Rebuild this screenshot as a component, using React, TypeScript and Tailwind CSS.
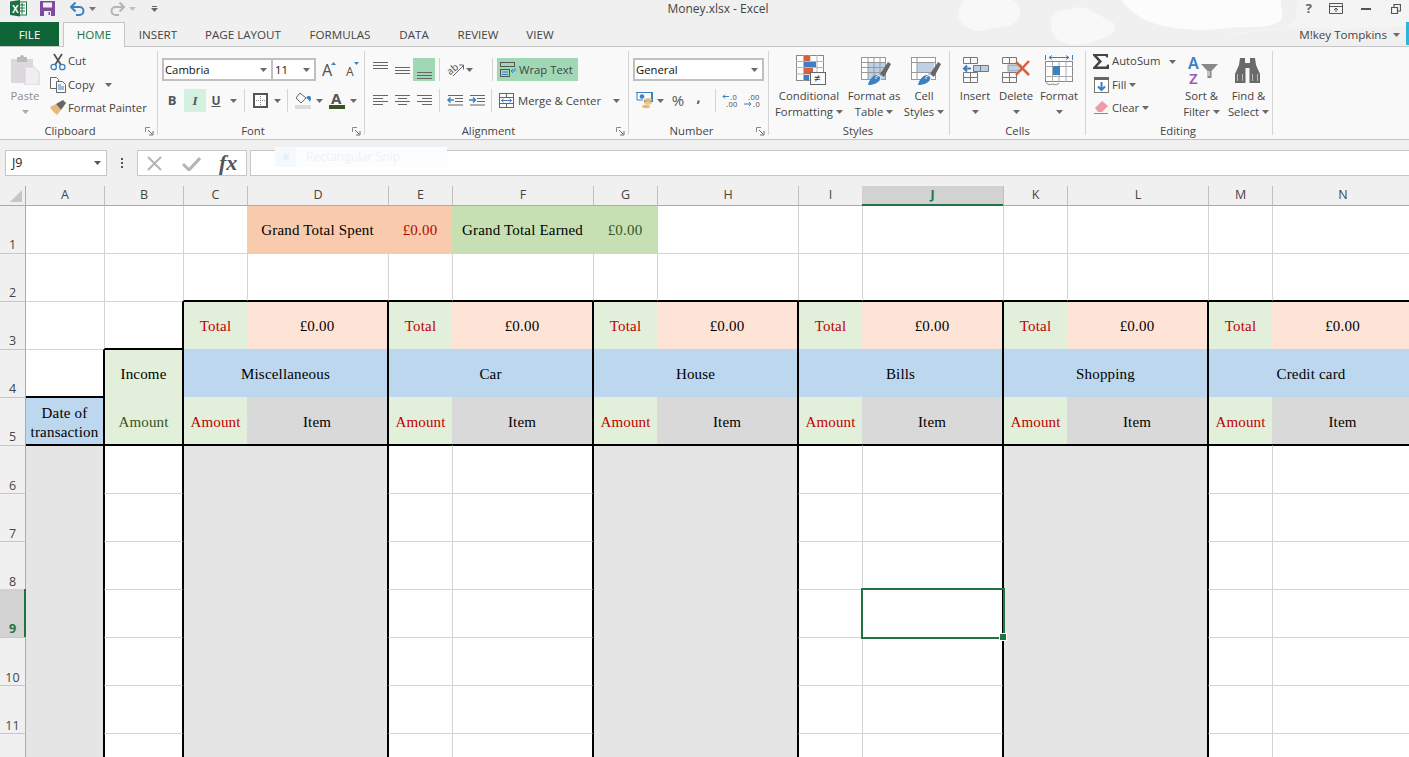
import React from 'react';

const Caret = ({ c = '#6a6a6a' }: { c?: string }) => (
  <svg width="7" height="4" viewBox="0 0 7 4" className="shrink-0"><path d="M0 0h7L3.5 4z" fill={c} /></svg>
);

const Launcher = () => (
  <svg width="9" height="9" viewBox="0 0 9 9" className="absolute right-[3px] bottom-[-1px]">
    <path d="M.5 5V.5H5" fill="none" stroke="#8a8a8a" />
    <path d="M3 3l4 4M8 4v4H4" fill="none" stroke="#6a6a6a" />
  </svg>
);

const GroupLabel = ({ children, cls = '' }: { children: React.ReactNode; cls?: string }) => (
  <div className={`mt-auto h-[17px] mb-[-4px] leading-[17px] text-center text-[#444] ${cls}`}>{children}</div>
);

const Sep = () => <div className="w-px h-[23px] bg-[#d4d4d4] shrink-0" />;

const Lines = ({ ys, xs }: { ys: number[]; xs: [number, number][] }) => (
  <svg width="15" height="22" viewBox="0 0 15 22">
    {ys.map((y, i) => (
      <path key={i} d={`M${xs[i][0]} ${y + 0.5}H${xs[i][1]}`} stroke="#666" strokeWidth="1" />
    ))}
  </svg>
);

const Big = ({ icon, l1, l2, w, iconCls = '' }: { icon: React.ReactNode; l1: string; l2?: string; w: string; iconCls?: string }) => (
  <div className={`${w} flex flex-col items-center shrink-0 pt-[4px]`}>
    <div className={`h-[30px] flex items-center justify-center ${iconCls}`}>{icon}</div>
    <div className="mt-[3px] h-[16px] leading-[16px] whitespace-nowrap">{l1}</div>
    <div className="h-[16px] leading-[16px] whitespace-nowrap flex items-center gap-[3px]">
      {l2}
      <Caret />
    </div>
  </div>
);

const ExcelIcon = () => (
  <svg width="17" height="17" viewBox="0 0 17 17">
    <rect x="7" y="2" width="9.5" height="13" fill="#fff" stroke="#217346" />
    <path d="M9 5h6M9 8h6M9 11h6M12 3v11" stroke="#217346" />
    <path d="M0 1.5 10 0v16.5L0 15z" fill="#1d7044" />
    <text x="2" y="12.5" fontSize="10" fontWeight="700" fill="#fff" fontFamily="Liberation Sans">X</text>
  </svg>
);
const SaveIcon = () => (
  <svg width="15" height="15" viewBox="0 0 15 15">
    <path d="M0 0h15v15H0z" fill="#7d4c9e" />
    <path d="M3 1.5h9v5H3z" fill="#f0f0f0" />
    <path d="M4 10h7v5H4z" fill="#f0f0f0" />
    <path d="M8.5 11h1.5v3H8.5z" fill="#7d4c9e" />
  </svg>
);
const Undo = ({ c, flip }: { c: string; flip?: boolean }) => (
  <svg width="15" height="14" viewBox="0 0 15 14" style={flip ? { transform: 'scaleX(-1)' } : undefined}>
    <path d="M2 5h7.5a4 4 0 0 1 0 8H6" fill="none" stroke={c} strokeWidth="2" />
    <path d="M5.5 0.5 1 5l4.5 4.5" fill="none" stroke={c} strokeWidth="2" />
  </svg>
);

const Paste = () => (
  <svg width="29" height="30" viewBox="0 0 29 30">
    <path d="M0 4h22v24H0z" fill="#dcd8dc" />
    <path d="M6 2h3a2 2 0 0 1 4 0h3v5H6z" fill="#bdb9bd" />
    <path d="M14 12h9l5 5v13H14z" fill="#f1eef3" stroke="#d6d2d8" />
  </svg>
);
const Scissors = () => (
  <svg width="16" height="18" viewBox="0 0 16 18">
    <path d="M4 1l7 11M12 1 5 12" stroke="#555" strokeWidth="1.8" fill="none" />
    <circle cx="3.7" cy="14" r="2.7" fill="none" stroke="#3d7fc1" strokeWidth="1.3" />
    <circle cx="12.3" cy="14" r="2.7" fill="none" stroke="#3d7fc1" strokeWidth="1.3" />
  </svg>
);
const CopyIcon = () => (
  <svg width="16" height="16" viewBox="0 0 16 16">
    <path d="M.5.5h6l2 2v9h-8z" fill="#fafafa" stroke="#666" />
    <path d="M6.5 4.5h6l3 3v8h-9z" fill="#fafafa" stroke="#666" />
    <path d="M8 8h3M8 10h6M8 12h6" stroke="#3d7fc1" />
  </svg>
);
const Brush = () => (
  <svg width="16" height="15" viewBox="0 0 16 15">
    <path d="M0 7l6-3 5 6-4 5C5 13 2 11 0 7z" fill="#e8b878" />
    <path d="M6 4l7-4 3 3-5 7z" fill="#666" />
  </svg>
);
const GrowA = ({ big }: { big?: boolean }) => (
  <svg width="15" height="22" viewBox="0 0 15 22" className="overflow-visible">
    <text x={big ? 0 : 1} y="17" fontSize={big ? 16 : 12} fill="#555" fontFamily="Noto Sans">A</text>
    {big ? <path d="M9 6l2.500-3L14 6z" fill="#3d7fc1" /> : <path d="M9 3l2.500 3L14 3z" fill="#3d7fc1" />}
  </svg>
);
const BorderIcon = () => (
  <svg width="15" height="15" viewBox="0 0 15 15">
    <rect x="1" y="1" width="13" height="13" fill="#fff" stroke="#555" strokeWidth="2" />
    <path d="M7.500 3v9M3 7.500h9" stroke="#888" strokeDasharray="1 1" />
  </svg>
);
const FillIcon = () => (
  <svg width="17" height="19" viewBox="0 0 17 19">
    <path d="M5 2 1 7l5 5 5-5z" fill="#fafafa" stroke="#666" />
    <path d="M11 7c2-3 5-3 5 1l-1 3c-1-2-2-3-4-4z" fill="#3d7fc1" />
    <rect x="0" y="14" width="16" height="4" fill="#dcdcdc" />
  </svg>
);
const ColorA = () => (
  <svg width="17" height="19" viewBox="0 0 17 19" className="overflow-visible">
    <text x="2" y="13" fontSize="15" fontWeight="700" fill="#555" fontFamily="Noto Sans">A</text>
    <rect x="0" y="14" width="16" height="4" fill="#375623" />
  </svg>
);
const Orient = () => (
  <svg width="17" height="15" viewBox="0 0 17 15" className="overflow-visible">
    <text x="0" y="11" fontSize="10" fill="#555" fontFamily="Noto Sans" transform="rotate(-40 5 8)">ab</text>
    <path d="M6 14 16 4M12 3h4.500v4.500" stroke="#666" fill="none" />
  </svg>
);
const Indent = ({ inc }: { inc?: boolean }) => (
  <svg width="16" height="11" viewBox="0 0 16 11">
    <path d="M1 .5h15M8 3.500h8M8 6.500h8M1 10H16" stroke="#666" />
    {inc ? <path d="M0 5h6M4 2.500 6.500 5 4 7.500" stroke="#3d7fc1" strokeWidth="1.500" fill="none" /> : <path d="M7 5H1M3.500 2.500 1 5l2.500 2.500" stroke="#3d7fc1" strokeWidth="1.500" fill="none" />}
  </svg>
);
const WrapIcon = () => (
  <svg width="16" height="15" viewBox="0 0 16 15">
    <rect x=".5" y=".5" width="14" height="4" fill="none" stroke="#555" />
    <rect x=".5" y="7.500" width="9" height="7" fill="none" stroke="#555" />
    <path d="M2 10h6M2 12.500h6" stroke="#3d7fc1" />
    <path d="M15 6v3h-4M13 7l-2 2 2 2" stroke="#3d7fc1" fill="none" />
  </svg>
);
const MergeIcon = () => (
  <svg width="15" height="15" viewBox="0 0 15 15">
    <rect x=".5" y=".5" width="14" height="14" fill="#fafafa" stroke="#666" />
    <path d="M0 4.500h15M0 10.500h15M7.500 0v4M7.500 11v4" stroke="#666" />
    <path d="M2.500 7.500h10M4.500 5.800l-2 1.700 2 1.700M10.500 5.800l2 1.700-2 1.700" stroke="#3d7fc1" fill="none" />
  </svg>
);
const Accounting = () => (
  <svg width="17" height="17" viewBox="0 0 17 17">
    <path d="M0 0h16v9H8" fill="none" stroke="#3d7fc1" strokeWidth="2" />
    <path d="M1 1v7h6" fill="none" stroke="#3d7fc1" />
    <circle cx="6" cy="4.500" r="2.300" fill="#3d7fc1" />
    <ellipse cx="12" cy="8" rx="4" ry="1.700" fill="#e8b878" />
    <ellipse cx="12" cy="11" rx="4" ry="1.700" fill="#eec98f" />
    <ellipse cx="10" cy="14.500" rx="4" ry="1.700" fill="#e8b878" />
  </svg>
);
const DecIcon = ({ inc }: { inc?: boolean }) => (
  <svg width="17" height="15" viewBox="0 0 17 15" className="overflow-visible">
    {inc ? (
      <>
        <text x="4" y="6.500" fontSize="7.500" letterSpacing="0.4" fill="#555" fontFamily="Noto Sans">.00</text>
        <text x="9" y="14" fontSize="7.500" letterSpacing="0.4" fill="#555" fontFamily="Noto Sans">.0</text>
        <path d="M0 11h7M5 9l2 2-2 2" stroke="#3d7fc1" fill="none" />
      </>
    ) : (
      <>
        <text x="8" y="6.500" fontSize="7.500" letterSpacing="0.4" fill="#555" fontFamily="Noto Sans">.0</text>
        <text x="4" y="14" fontSize="7.500" letterSpacing="0.4" fill="#555" fontFamily="Noto Sans">.00</text>
        <path d="M7 3.500H1M3 1.500l-2 2 2 2" stroke="#3d7fc1" fill="none" />
      </>
    )}
  </svg>
);
const CondIcon = () => (
  <svg width="30" height="30" viewBox="0 0 30 30">
    <rect x=".5" y=".5" width="27" height="25" fill="#fff" stroke="#888" />
    <path d="M7.500 0v26M14 0v26M21 0v26M0 6.500h28M0 12.500h28M0 19h28" stroke="#b5b5b5" />
    <rect x="8" y="1" width="6" height="5" fill="#d9603b" />
    <rect x="8" y="7" width="12" height="5" fill="#3d7fc1" />
    <rect x="8" y="13" width="9" height="6" fill="#d9603b" />
    <rect x="8" y="20" width="5" height="5" fill="#3d7fc1" />
    <rect x="14.500" y="17.500" width="15" height="12" fill="#fafafa" stroke="#666" />
    <text x="18" y="27" fontSize="11" fill="#333" fontFamily="Liberation Sans">≠</text>
  </svg>
);
const TableIcon = ({ cell }: { cell?: boolean }) => (
  <svg width="30" height="30" viewBox="0 0 30 30">
    <rect x=".5" y="2.500" width="24" height="22" fill="#fff" stroke="#999" />
    {cell ? (
      <>
        <rect x="6" y="7" width="17" height="10" fill="#bdd0e6" />
        <path d="M0 7.500h25M6 3v22M0 17.500h25M18 17v8" stroke="#999" fill="none" />
      </>
    ) : (
      <>
        <rect x="7" y="7" width="17" height="17" fill="#bdd0e6" />
        <path d="M0 7.500h25M0 12.500h25M0 17.500h25M7 3v22M13 3v22M19 3v22" stroke="#999" fill="none" />
      </>
    )}
    <path d="M19 19l8-12 3 2-7 13z" fill="#666" />
    <path d="M7 30c1-5 5-10 9-10 3 0 5 3 3 5-2 3-7 5-12 5z" fill="#3d7fc1" />
    <path d="M15 24a2.500 2.500 0 1 1 4 1" fill="none" stroke="#fff" />
  </svg>
);
const InsertIcon = () => (
  <svg width="27" height="28" viewBox="0 0 27 28">
    <path d="M1.500 1.500h14v6h-14zM8.500 1.500v6M1.500 16.500h14v10h-14zM1.500 21.500h14M8.500 16.500v10" fill="none" stroke="#777" />
    <path d="M11.500 9.500h15v6h-15zM18.500 9.500v6" fill="#bdd0e6" stroke="#777" />
    <path d="M9 12.500H2M5 9.500l-3 3 3 3" fill="none" stroke="#3d7fc1" strokeWidth="2" />
  </svg>
);
const DeleteIcon = () => (
  <svg width="30" height="28" viewBox="0 0 30 28">
    <path d="M1.500 1.500h14v6h-14zM8.500 1.500v6M1.500 16.500h14v10h-14zM1.500 21.500h14M8.500 16.500v10" fill="none" stroke="#777" />
    <rect x="7" y="9" width="13" height="6" fill="#bdd0e6" stroke="#999" />
    <path d="M15 6l13 13M28 5 15 19" stroke="#d9603b" strokeWidth="2.500" />
  </svg>
);
const FormatIcon = () => (
  <svg width="29" height="31" viewBox="0 0 29 31">
    <path d="M.5 0v5M27.500 0v5M4 2.500h20M7 .5l-3 2 3 2M21 .5l3 2-3 2" fill="none" stroke="#3d7fc1" />
    <rect x=".5" y="6.500" width="27" height="20" fill="#fff" stroke="#888" />
    <path d="M7.500 7v20M14 7v20M21 7v20M0 11.500h28M0 21.500h28" stroke="#aaa" />
    <rect x="8" y="11" width="7" height="9" fill="#3d7fc1" />
    <path d="M1 27c1 3 5 3 7 2 2 1 5 1 6-1" fill="none" stroke="#888" />
  </svg>
);
const Sigma = () => (
  <svg width="16" height="15" viewBox="0 0 16 15"><path d="M0 0h15v3.500h-1.500L12.500 2H4l5 5.500L4 12.500h9l1.500-2H16V15H0v-1.500L5.500 7.500 0 1.500z" fill="#444" /></svg>
);
const FillDown = () => (
  <svg width="15" height="16" viewBox="0 0 15 16">
    <rect x=".5" y=".5" width="14" height="15" fill="#fff" stroke="#777" />
    <rect x="0" y="0" width="15" height="3" fill="#666" />
    <path d="M7.500 5v8M4 9.500l3.500 3.500L11 9.500" fill="none" stroke="#3d7fc1" strokeWidth="2" />
  </svg>
);
const Eraser = () => (
  <svg width="15" height="13" viewBox="0 0 15 13">
    <path d="M1 7l7-7 6 5-6 6H4z" fill="#ef9aa5" />
    <path d="M0 12.500h14" stroke="#888" />
  </svg>
);
const SortIcon = () => (
  <svg width="31" height="28" viewBox="0 0 31 28" className="overflow-visible">
    <text x="0" y="13" fontSize="16" fontWeight="600" fill="#3d7fc1" fontFamily="Noto Sans">A</text>
    <text x="1" y="28" fontSize="15" fontWeight="600" fill="#9a5cb4" fontFamily="Noto Sans">Z</text>
    <path d="M13 8h17l-6.500 7v7h-4v-7z" fill="#888" />
    <path d="M21 15v5" stroke="#fff" />
  </svg>
);
const Binoculars = () => (
  <svg width="27" height="25" viewBox="0 0 27 25">
    <path d="M6 0h5v5h5V0h5l1 7 4 9v9H15.500V10h-4v15H1v-9l4-9z" fill="#6a6a6a" />
    <path d="M3.500 16v7M8.500 16v7M18.500 16v7M23.500 16v7" stroke="#bbb" />
  </svg>
);

const Clouds = () => (
  <svg width="464" height="46" viewBox="0 0 464 46" className="absolute left-[945px] top-0 pointer-events-none">
    <g fill="#f8f8f8">
      <path d="M18 0h50c8 6 10 14 4 20-4 6-14 8-24 8-10 4-20 4-24 0-8-2-12-10-10-18z" />
      <path d="M106 22c-2-8 8-14 18-12 6-4 18-4 24 2 8 4 16 8 22 12 2 8-6 14-18 16-14 6-26 6-34 2-8-2-12-10-12-20z" />
      <path d="M176 0h160c-2 8 6 14-2 22-14 8-30 4-50 6-30 4-60 2-84-8-10-6-18-12-24-20z" fill="#fcfcfc" />
      <path d="M280 36c20-6 60-12 110-6l74-4v-26h-112c0 10 2 20-12 28-20 4-40 4-60 8z" fill="#f4f4f4" />
    </g>
  </svg>
);

const Tab = ({ w, children }: { w: string; children: string }) => (
  <div className={`${w} h-full flex items-center justify-center text-[#444] shrink-0`}>{children}</div>
);

const COLS = ['A', 'B', 'C', 'D', 'E', 'F', 'G', 'H', 'I', 'J', 'K', 'L', 'M', 'N'];
const F_GREEN = 'bg-[#e2efda]';
const F_PEACH = 'bg-[#fde4d6]';
const F_BLUE = 'bg-[#bdd7ee]';
const F_GREY = 'bg-[#d9d9d9]';
const F_LIGHT = 'bg-[#e5e5e5]';
const RED = 'text-[#c00000]';

const vThick = (row: number, c: number) => {
  if (c === 0) return row >= 4;
  if (c % 2 === 1 && c < 13) return row >= 3;
  return false;
};
const hThick = (row: number, c: number) =>
  (row === 2 && c >= 2) || (row === 3 && c === 1) || (row === 4 && c === 0) || row === 5;

type CellProps = {
  row: number;
  c: number;
  span?: boolean;
  fill?: string;
  text?: string;
  color?: string;
};

const Cell = ({ row, c, span, fill, text, color = 'text-black' }: CellProps) => {
  const end = span ? c + 1 : c;
  const rThick = vThick(row, end);
  const lThick = c > 0 && vThick(row, c - 1);
  const bThick = hThick(row, c);
  const tThick = row > 1 && hThick(row - 1, c);
  const cls = [
    'flex items-center justify-center text-center leading-[19px] min-w-0',
    span ? 'col-span-2' : '',
    fill ?? 'bg-white',
    color,
    text ? (row === 5 ? 'pt-[4px]' : row === 4 ? 'pt-[2px]' : 'pt-[1px]') : '',
    rThick ? 'border-r border-r-black' : '',
    lThick ? 'border-l border-l-black' : !fill && c > 0 ? 'border-l border-l-[#d4d4d4]' : '',
    bThick ? 'border-b border-b-black' : '',
    tThick ? 'border-t border-t-black' : !fill && row > 1 ? 'border-t border-t-[#d4d4d4]' : '',
  ].join(' ');
  return <div className={cls}>{text}</div>;
};

const PAIR_NAMES = ['Miscellaneous', 'Car', 'House', 'Bills', 'Shopping', 'Credit card'];

const Sheet = () => {
  const cells: React.ReactNode[] = [];
  cells.push(
    <div key="corner" className="bg-[#f0f0f0] border-r border-b border-[#ababab] flex items-end justify-end p-[3px]">
      <svg width="12" height="12" viewBox="0 0 12 12"><path d="M12 0v12H0z" fill="#c6c6c6" /></svg>
    </div>
  );
  COLS.forEach((c) =>
    cells.push(
      <div
        key={c}
        className={
          c === 'J'
            ? 'bg-[#d2d2d2] border-b-2 border-b-[#217346] flex items-center justify-center text-[#217346] font-bold'
            : c === 'A'
              ? 'bg-[#f0f0f0] border-b border-b-[#ababab] flex items-center justify-center text-[#444]'
              : 'bg-[#f0f0f0] border-l border-l-[#c0c0c0] border-b border-b-[#ababab] flex items-center justify-center text-[#444]'
        }
      >
        {c}
      </div>
    )
  );
  for (let row = 1; row <= 12; row++) {
    cells.push(
      <div
        key={`h${row}`}
        className={
          row === 9
            ? 'bg-[#d2d2d2] border-r-2 border-r-[#217346] flex items-end justify-center pb-[1px] pl-[1px] leading-[14px] text-[#217346] font-bold'
            : row === 1
              ? 'bg-[#f0f0f0] border-r border-r-[#ababab] flex items-end justify-center pb-[1px] leading-[14px] text-[#444]'
              : row >= 6
                ? 'bg-[#f0f0f0] border-r border-r-[#ababab] border-t border-t-[#c6c6c6] flex items-end justify-center leading-[14px] text-[#444]'
                : 'bg-[#f0f0f0] border-r border-r-[#ababab] border-t border-t-[#c6c6c6] flex items-end justify-center pb-[1px] leading-[14px] text-[#444]'
        }
      >
        {row < 12 ? row : null}
      </div>
    );
    const serif = [] as React.ReactNode[];
    const add = (c: number, p: Partial<CellProps> = {}) => serif.push(<Cell key={`${row}-${c}`} row={row} c={c} {...p} />);
    if (row === 1) {
      add(0); add(1); add(2);
      add(3, { fill: 'bg-[#f8cbad]', text: 'Grand Total Spent' });
      add(4, { fill: 'bg-[#f8cbad]', text: '£0.00', color: RED });
      add(5, { fill: 'bg-[#c6e0b4]', text: 'Grand Total Earned' });
      add(6, { fill: 'bg-[#c6e0b4]', text: '£0.00', color: 'text-[#375623]' });
      for (let c = 7; c < 14; c++) add(c);
    } else if (row === 2) {
      for (let c = 0; c < 14; c++) add(c);
    } else if (row === 3) {
      add(0); add(1);
      for (let c = 2; c < 14; c += 2) {
        add(c, { fill: F_GREEN, text: 'Total', color: RED });
        add(c + 1, { fill: F_PEACH, text: '£0.00' });
      }
    } else if (row === 4) {
      add(0);
      add(1, { fill: F_GREEN, text: 'Income' });
      for (let i = 0; i < 6; i++) add(2 + i * 2, { span: true, fill: F_BLUE, text: PAIR_NAMES[i] });
    } else if (row === 5) {
      add(0, { fill: F_BLUE, text: 'Date of transaction' });
      add(1, { fill: F_GREEN, text: 'Amount', color: 'text-[#375623]' });
      for (let c = 2; c < 14; c += 2) {
        add(c, { fill: F_GREEN, text: 'Amount', color: RED });
        add(c + 1, { fill: F_GREY, text: 'Item' });
      }
    } else {
      add(0, { fill: F_LIGHT });
      add(1);
      for (let c = 2; c < 14; c += 2) {
        const f = c % 4 === 2 ? { fill: F_LIGHT } : {};
        add(c, f);
        add(c + 1, f);
      }
    }
    cells.push(
      <div key={`r${row}`} className="contents font-['Liberation_Serif',serif] text-[15px] tracking-[0.18px]">
        {serif}
      </div>
    );
  }
  return (
    <div className="relative grid grid-cols-[26px_78px_79px_64px_141px_64px_141px_64px_141px_64px_141px_64px_141px_64px_141px] grid-rows-[20px_47px_repeat(11,48px)] text-[12.5px]">
      {cells}
      <div className="absolute left-[861px] top-[402px] w-[144px] h-[51px] border-2 border-[#217346] pointer-events-none">
        <div className="absolute right-[-3px] bottom-[-3px] w-[6px] h-[6px] bg-[#217346] outline outline-1 outline-white" />
      </div>
    </div>
  );
};

export default function App() {
  return (
    <div className="w-[1409px] h-[757px] overflow-hidden bg-[#f0f0f0] font-['Open_Sans',sans-serif] text-[11.3px] text-[#444]">
      {/* title bar */}
      <div className="relative h-[22px] flex items-start">
        <Clouds />
        <div className="relative flex items-center w-full h-[17px]">
          <div className="ml-[10px]"><ExcelIcon /></div>
          <div className="ml-[13px]"><SaveIcon /></div>
          <div className="ml-[15px]"><Undo c="#3d7fc1" /></div>
          <div className="ml-[4px]"><Caret c="#777" /></div>
          <div className="ml-[14px]"><Undo c="#b5b5b5" flip /></div>
          <div className="ml-[4px]"><Caret c="#c0c0c0" /></div>
          <div className="ml-[15px] flex flex-col items-center gap-[1px]">
            <div className="w-[5px] h-px bg-[#666]" />
            <Caret c="#666" />
          </div>
          <div className="absolute left-[618px] w-[200px] text-center text-[12px] text-[#444]">Money.xlsx - Excel</div>
          <div className="ml-auto flex items-center pr-[8px]">
            <span className="font-bold text-[13px] text-[#666] mr-[17px]">?</span>
            <svg width="14" height="12" viewBox="0 0 14 12" className="mr-[18px]"><path d="M.5.500h13v10H.500zM0 3.500h14M7 9V5M5 7l2-2 2 2" fill="none" stroke="#555" /></svg>
            <div className="w-[10px] h-[2px] bg-[#555] mr-[20px]" />
            <svg width="10" height="10" viewBox="0 0 10 10"><path d="M.5 3.500h6v6h-6zM3 3V.5h6.500V7H7" fill="none" stroke="#555" strokeWidth="1.200" /></svg>
          </div>
        </div>
      </div>
      {/* tabs */}
      <div className="relative h-[25px] flex items-stretch text-[11.6px]">
        <div className="w-[59px] bg-[#0e6537] text-white flex items-center justify-center">FILE</div>
        <div className="w-[4px]" />
        <div className="w-[62px] h-[25px] bg-[#f9f9f9] border border-b-0 border-[#c6c6c6] text-[#217346] flex items-center justify-center z-10">HOME</div>
        <Tab w="w-[66px]">INSERT</Tab>
        <Tab w="w-[104px]">PAGE LAYOUT</Tab>
        <Tab w="w-[90px]">FORMULAS</Tab>
        <Tab w="w-[58px]">DATA</Tab>
        <Tab w="w-[70px]">REVIEW</Tab>
        <Tab w="w-[54px]">VIEW</Tab>
        <div className="ml-auto flex items-center">
          <span className="text-[#444]">M!key Tompkins</span>
          <div className="ml-[6px] mr-[9px]"><Caret /></div>
        </div>
        <div className="absolute right-0 top-0 w-[3px] h-[23px] bg-[#2bb4dc]" />
        <div className="absolute left-0 right-0 bottom-0 h-px bg-[#c6c6c6]" />
      </div>
      {/* ribbon */}
      <div className="h-[93px] bg-[#f9f9f9] border-b border-[#c6c6c6] pt-[4px] flex items-start">
        {/* Clipboard */}
        <div className="relative w-[158px] h-[84px] border-r border-[#d4d4d4] flex flex-col shrink-0">
          <div className="flex">
            <div className="w-[50px] flex flex-col items-center pt-[4px] text-[#8c8c8c]">
              <Paste />
              <div className="mt-[3px] h-[16px] leading-[16px]">Paste</div>
              <div className="h-[16px] flex items-center"><Caret c="#aaa" /></div>
            </div>
            <div className="flex flex-col -mt-[1px]">
              <div className="h-[23px] flex items-center gap-[2px]"><Scissors /><span>Cut</span></div>
              <div className="h-[23px] flex items-center gap-[2px]"><CopyIcon /><span className="pt-[1px]">Copy</span><div className="ml-[9px]"><Caret /></div></div>
              <div className="h-[23px] flex items-center gap-[2px]"><Brush /><span className="pt-[2px]">Format Painter</span></div>
            </div>
          </div>
          <GroupLabel><span className="pr-[17px]">Clipboard</span></GroupLabel>
          <Launcher />
        </div>
        {/* Font */}
        <div className="relative w-[207px] h-[84px] border-r border-[#d4d4d4] flex flex-col shrink-0 pt-[7px]">
          <div className="flex h-[23px] pl-[4px] items-center">
            <div className="w-[111px] h-[23px] bg-white border-2 border-[#c0c0c0] flex items-center pl-[1px] pr-[4px] justify-between text-[#111]"><span className="pt-[2px]">Cambria</span><Caret /></div>
            <div className="w-[43px] h-[23px] bg-white border-2 border-l-0 border-[#c0c0c0] flex items-center pl-[2px] pr-[4px] justify-between text-[#111]"><span className="pt-[2px]">11</span><Caret /></div>
            <div className="ml-[6px]"><GrowA big /></div>
            <div className="ml-[8px]"><GrowA /></div>
          </div>
          <div className="flex h-[23px] mt-[8px] pl-[3px] items-center">
            <div className="w-[22px] text-center font-bold text-[13px] text-[#555]">B</div>
            <div className="w-[22px] ml-px h-[23px] bg-[#d3f0e0] flex items-center justify-center italic font-bold text-[13px] text-[#555] font-['Liberation_Serif',serif]">I</div>
            <div className="w-[20px] text-center font-bold text-[12px] underline text-[#555]">U</div>
            <div className="w-[14px] flex justify-center"><Caret /></div>
            <div className="ml-[4px]"><Sep /></div>
            <div className="w-[22px] flex justify-center ml-[4px]"><BorderIcon /></div>
            <div className="w-[10px] flex justify-center ml-[1px]"><Caret /></div>
            <div className="ml-[5px]"><Sep /></div>
            <div className="ml-[7px]"><FillIcon /></div>
            <div className="ml-[4px]"><Caret /></div>
            <div className="ml-[6px]"><ColorA /></div>
            <div className="ml-[4px]"><Caret /></div>
          </div>
          <GroupLabel cls="pr-[16px]">Font</GroupLabel>
          <Launcher />
        </div>
        {/* Alignment */}
        <div className="relative w-[264px] h-[84px] border-r border-[#d4d4d4] flex flex-col shrink-0 pt-[7px]">
          <div className="flex h-[23px] pl-[4px] items-center">
            <div className="w-[22px] flex justify-center"><Lines ys={[3, 6, 9]} xs={[[0, 15], [0, 15], [0, 15]]} /></div>
            <div className="w-[22px] flex justify-center"><Lines ys={[8, 11, 14]} xs={[[0, 15], [0, 15], [0, 15]]} /></div>
            <div className="w-[22px] h-[23px] bg-[#a0d8b5] flex justify-center items-center"><Lines ys={[13, 16, 19]} xs={[[0, 15], [0, 15], [0, 15]]} /></div>
            <div className="ml-[4px]"><Sep /></div>
            <div className="ml-[7px]"><Orient /></div>
            <div className="ml-[2px]"><Caret /></div>
            <div className="ml-[19px]"><Sep /></div>
            <div className="ml-[4px] w-[81px] h-[23px] bg-[#a0d8b5] flex items-center pl-[3px] gap-[3px] whitespace-nowrap"><WrapIcon /><span className="pt-[2px]">Wrap Text</span></div>
          </div>
          <div className="flex h-[23px] mt-[8px] pl-[4px] items-center">
            <div className="w-[22px] flex justify-center"><Lines ys={[5, 8, 11, 14]} xs={[[0, 15], [0, 10], [0, 15], [0, 10]]} /></div>
            <div className="w-[22px] flex justify-center"><Lines ys={[5, 8, 11, 14]} xs={[[0, 15], [3, 12], [0, 15], [3, 12]]} /></div>
            <div className="w-[22px] flex justify-center"><Lines ys={[5, 8, 11, 14]} xs={[[0, 15], [5, 15], [0, 15], [5, 15]]} /></div>
            <div className="ml-[4px]"><Sep /></div>
            <div className="ml-[7px]"><Indent /></div>
            <div className="ml-[6px]"><Indent inc /></div>
            <div className="ml-[6px]"><Sep /></div>
            <div className="ml-[7px]"><MergeIcon /></div>
            <span className="ml-[4px] pt-[2px] whitespace-nowrap">Merge &amp; Center</span>
            <div className="ml-[12px]"><Caret /></div>
          </div>
          <GroupLabel cls="pr-[16px]">Alignment</GroupLabel>
          <Launcher />
        </div>
        {/* Number */}
        <div className="relative w-[140px] h-[84px] border-r border-[#d4d4d4] flex flex-col shrink-0 pt-[7px]">
          <div className="flex h-[23px] pl-[4px] items-center">
            <div className="w-[131px] h-[23px] bg-white border-2 border-[#c0c0c0] flex items-center pl-[1px] pr-[4px] justify-between text-[#111]"><span className="pt-[2px]">General</span><Caret /></div>
          </div>
          <div className="flex h-[23px] mt-[8px] pl-[7px] items-center">
            <Accounting />
            <div className="ml-[4px]"><Caret /></div>
            <span className="ml-[4px] w-[20px] text-center text-[15px] text-[#555]">%</span>
            <span className="w-[21px] mb-[7px] text-center font-bold text-[14px] text-[#555] leading-[14px]">,</span>
            <div className="ml-[6px]"><Sep /></div>
            <div className="ml-[6px]"><DecIcon /></div>
            <div className="ml-[5px]"><DecIcon inc /></div>
          </div>
          <GroupLabel cls="pr-[14px]">Number</GroupLabel>
          <Launcher />
        </div>
        {/* Styles */}
        <div className="relative w-[181px] h-[84px] border-r border-[#d4d4d4] flex flex-col shrink-0">
          <div className="flex pl-[7px]">
            <Big w="w-[66px]" iconCls="pl-[3px]" icon={<CondIcon />} l1="Conditional" l2="Formatting" />
            <Big w="w-[64px]" iconCls="pl-[3px]" icon={<TableIcon />} l1="Format as" l2="Table" />
            <Big w="w-[36px]" iconCls="pl-[3px]" icon={<TableIcon cell />} l1="Cell" l2="Styles" />
          </div>
          <GroupLabel><span className="pr-[2px]">Styles</span></GroupLabel>
        </div>
        {/* Cells */}
        <div className="relative w-[136px] h-[84px] border-r border-[#d4d4d4] flex flex-col shrink-0">
          <div className="flex pl-[5px]">
            <Big w="w-[40px]" icon={<InsertIcon />} l1="Insert" />
            <Big w="w-[42px]" icon={<DeleteIcon />} l1="Delete" />
            <Big w="w-[44px]" icon={<FormatIcon />} l1="Format" />
          </div>
          <GroupLabel>Cells</GroupLabel>
        </div>
        {/* Editing */}
        <div className="relative w-[187px] h-[84px] border-r border-[#d4d4d4] flex flex-col shrink-0">
          <div className="flex pl-[7px]">
            <div className="w-[88px] flex flex-col -mt-[1px]">
              <div className="h-[23px] flex items-center"><div className="w-[19px]"><Sigma /></div>AutoSum<div className="ml-[9px]"><Caret /></div></div>
              <div className="h-[23px] flex items-center"><div className="w-[19px] pl-px"><FillDown /></div><span className="pt-[1px]">Fill</span><div className="ml-[3px]"><Caret /></div></div>
              <div className="h-[23px] flex items-center"><div className="w-[19px] pl-px"><Eraser /></div><span className="pt-[1px]">Clear</span><div className="ml-[3px]"><Caret /></div></div>
            </div>
            <Big w="w-[47px]" iconCls="pl-[3px]" icon={<SortIcon />} l1="Sort &" l2="Filter" />
            <Big w="w-[47px]" iconCls="pr-[3px]" icon={<Binoculars />} l1="Find &" l2="Select" />
          </div>
          <GroupLabel><span className="pr-[2px]">Editing</span></GroupLabel>
        </div>
      </div>
      {/* gap */}
      <div className="h-[10px]" />
      {/* formula bar */}
      <div className="h-[26px] flex items-stretch">
        <div className="ml-[5px] w-[102px] bg-white border border-[#c6c6c6] flex items-center justify-between pl-[6px] pr-[5px] text-[12.5px] text-[#222]">J9<Caret c="#555" /></div>
        <div className="w-[30px] flex flex-col items-center justify-center gap-[2px]">
          <div className="w-[2px] h-[2px] bg-[#555]" />
          <div className="w-[2px] h-[2px] bg-[#555]" />
          <div className="w-[2px] h-[2px] bg-[#555]" />
        </div>
        <div className="w-[110px] bg-white border border-[#c6c6c6] flex items-center pl-[9px]">
          <svg width="15" height="15" viewBox="0 0 15 15"><path d="M1 1l13 13M14 1 1 14" stroke="#b5b5b5" strokeWidth="2" /></svg>
          <svg width="19" height="15" viewBox="0 0 19 15" className="ml-[20px]"><path d="M1 8l6 6L18 2" fill="none" stroke="#b5b5b5" strokeWidth="3" /></svg>
          <span className="ml-[18px] font-['Liberation_Serif',serif] italic font-bold text-[22px] leading-[22px] text-[#555]">fx</span>
        </div>
        <div className="ml-[3px] flex-1 relative bg-white border border-r-0 border-[#c6c6c6]">
          <div className="absolute left-[24px] top-[-4px] w-[172px] h-[20px] bg-[#fbfdfe] flex items-center">
            <div className="w-[21px] h-[20px] bg-[#f4f9fd] flex items-center justify-center">
              <div className="w-[6px] h-[6px] rounded-full bg-[#e6eff8]" />
            </div>
            <span className="ml-[10px] text-[12px] text-[#edf2f7]">Rectangular Snip</span>
          </div>
        </div>
      </div>
      <div className="h-[10px]" />
      <Sheet />
    </div>
  );
}
